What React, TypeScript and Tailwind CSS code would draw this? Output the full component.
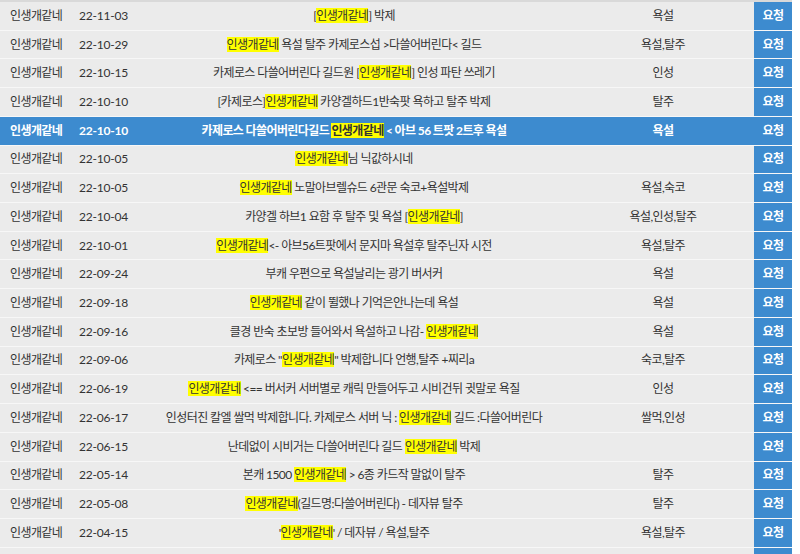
import React from 'react';

type Part = string | { hl: string };

interface Report {
  name: string;
  date: string;
  title: Part[];
  tags: string;
  selected?: boolean;
}

const N = { hl: '인생개같네' };

const reports: Report[] = [
  { name: '인생개같네', date: '22-11-03', title: ['[', N, '] 박제'], tags: '욕설' },
  { name: '인생개같네', date: '22-10-29', title: [N, ' 욕설 탈주 카제로스섭 >다쓸어버린다< 길드'], tags: '욕설,탈주' },
  { name: '인생개같네', date: '22-10-15', title: ['카제로스 다쓸어버린다 길드원 [', N, '] 인성 파탄 쓰레기'], tags: '인성' },
  { name: '인생개같네', date: '22-10-10', title: ['[카제로스]', N, ' 카양겔하드1반숙팟 욕하고 탈주 박제'], tags: '탈주' },
  { name: '인생개같네', date: '22-10-10', title: ['카제로스 다쓸어버린다길드 ', N, ' < 아브 56 트팟 2트후 욕설'], tags: '욕설', selected: true },
  { name: '인생개같네', date: '22-10-05', title: [N, '님 닉값하시네'], tags: '' },
  { name: '인생개같네', date: '22-10-05', title: [N, ' 노말아브렐슈드 6관문 숙코+욕설박제'], tags: '욕설,숙코' },
  { name: '인생개같네', date: '22-10-04', title: ['카양겔 하브1 요함 후 탈주 및 욕설 [', N, ']'], tags: '욕설,인성,탈주' },
  { name: '인생개같네', date: '22-10-01', title: [N, '<- 아브56트팟에서 문지마 욕설후 탈주닌자 시전'], tags: '욕설,탈주' },
  { name: '인생개같네', date: '22-09-24', title: ['부캐 우편으로 욕설날리는 광기 버서커'], tags: '욕설' },
  { name: '인생개같네', date: '22-09-18', title: [N, ' 같이 뛸했나 기억은안나는데 욕설'], tags: '욕설' },
  { name: '인생개같네', date: '22-09-16', title: ['클경 반숙 초보방 들어와서 욕설하고 나감- ', N], tags: '욕설' },
  { name: '인생개같네', date: '22-09-06', title: ['카제로스 "', N, '" 박제합니다 언행,탈주 +찌리a'], tags: '숙코,탈주' },
  { name: '인생개같네', date: '22-06-19', title: [N, ' <== 버서커 서버별로 캐릭 만들어두고 시비건뒤 귓말로 욕질'], tags: '인성' },
  { name: '인생개같네', date: '22-06-17', title: ['인성터진 칼엘 쌀먹 박제합니다. 카제로스 서버 닉 : ', N, ' 길드 :다쓸어버린다'], tags: '쌀먹,인성' },
  { name: '인생개같네', date: '22-06-15', title: ['난데없이 시비거는 다쓸어버린다 길드 ', N, ' 박제'], tags: '' },
  { name: '인생개같네', date: '22-05-14', title: ['본캐 1500 ', N, ' > 6종 카드작 말없이 탈주'], tags: '탈주' },
  { name: '인생개같네', date: '22-05-08', title: [N, '(길드명:다쓸어버린다) - 데자뷰 탈주'], tags: '탈주' },
  { name: '인생개같네', date: '22-04-15', title: ["'", N, "' / 데자뷰 / 욕설,탈주"], tags: '욕설,탈주' },
];

export default function App() {
  return (
    <div className="h-[554px] overflow-hidden bg-white font-['Lato','Noto_Sans_CJK_KR',sans-serif] text-[12px] text-[#333] tracking-[-0.6px]">
      <div className="w-[792px] bg-[#ebebeb] border-t-2 border-[#d9d9d9]">
        {reports.map((r, i) => (
          <div
            key={i}
            className={`flex items-stretch h-[28.72px] border-b border-[#f7f7f7] ${
              r.selected ? 'bg-[#3d8bcf] text-white font-bold' : ''
            }`}
          >
            <div className="w-[71px] pl-[10px] flex items-center whitespace-nowrap">{r.name}</div>
            <div className="w-[65px] pl-[8px] flex items-center whitespace-nowrap tracking-[-0.2px]">{r.date}</div>
            <div className="w-[436px] flex items-center justify-center whitespace-nowrap">
              <span>
                {r.title.map((p, j) =>
                  typeof p === 'string' ? (
                    <React.Fragment key={j}>{p}</React.Fragment>
                  ) : (
                    <span key={j} className="bg-[#ffff00] text-[#333]">
                      {p.hl}
                    </span>
                  )
                )}
              </span>
            </div>
            <div className="w-[182px] flex items-center justify-center whitespace-nowrap">{r.tags}</div>
            <div
              className={`w-[38px] flex items-center justify-center font-bold text-white ${
                r.selected ? '' : 'bg-[#3d8bcf]'
              }`}
            >
              요청
            </div>
          </div>
        ))}
        {/* next row, just peeking in at the bottom edge */}
        <div className="flex h-[28.72px]">
          <div className="flex-1" />
          <div className="w-[38px] bg-[#3d8bcf]" />
        </div>
      </div>
    </div>
  );
}
